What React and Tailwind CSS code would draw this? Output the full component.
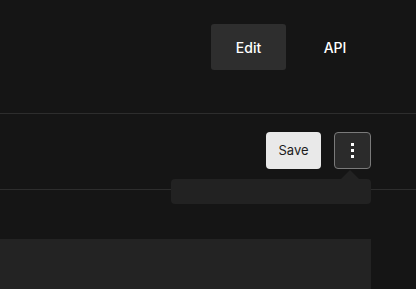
import React from "react";

export default function App() {
  return (
    <div className="w-[416px] h-[289px] overflow-hidden bg-[#151515] text-white" style={{ fontFamily: "Inter, 'Liberation Sans', sans-serif" }}>
      <div className="h-[113px] flex items-start justify-end pr-[43px] pt-[24px]">
        <div className="flex gap-[11px] items-center">
          <button className="w-[75px] h-[46px] rounded-[3px] bg-[#2e2e2e] text-[14px] font-medium text-white">Edit</button>
          <button className="w-[76px] h-[46px] rounded-[3px] text-[14px] font-medium text-white">API</button>
        </div>
      </div>
      <div className="h-px bg-[#2d2d2d]" />
      <div className="h-[75px] flex items-start justify-end pr-[45px] pt-[18px]">
        <div className="flex gap-[13px] items-center">
          <button className="w-[55px] h-[37px] rounded-[4px] bg-[#e9e9e9] text-[13px] text-[#1d1d1d]">Save</button>
          <div className="relative">
            <button className="w-[37px] h-[37px] rounded-[4px] bg-[#2b2b2b] border border-[#7a7a7a] flex flex-col items-center justify-center gap-[3px]">
              <span className="w-[3px] h-[3px] bg-white" />
              <span className="w-[3px] h-[3px] bg-white" />
              <span className="w-[3px] h-[3px] bg-white" />
            </button>
            <div className="absolute right-0 top-[47px] w-[200px] h-[25px] rounded-[4px] bg-[#222222] z-10">
              <div className="absolute top-[-9px] right-[12px] w-0 h-0 border-l-[9px] border-r-[9px] border-b-[9px] border-l-transparent border-r-transparent border-b-[#222222]" />
            </div>
          </div>
        </div>
      </div>
      <div className="h-px bg-[#2d2d2d]" />
      <div className="h-[49px]" />
      <div className="w-[371px] h-[50px] bg-[#232323]" />
    </div>
  );
}
